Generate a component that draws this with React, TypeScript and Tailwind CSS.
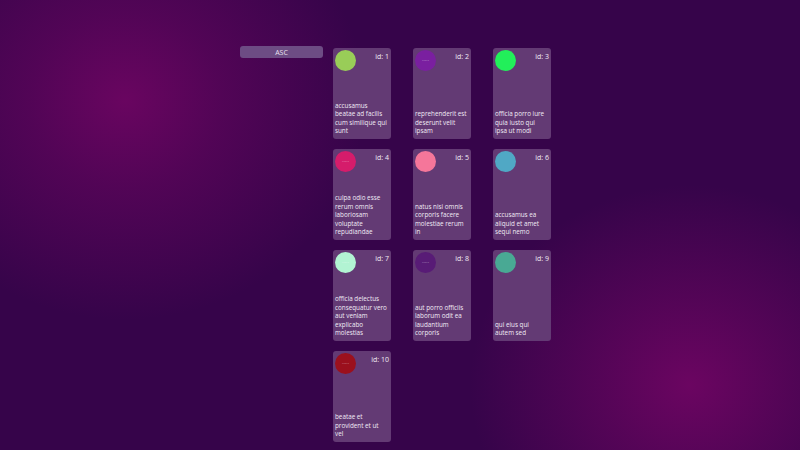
import React from 'react';

interface Post {
  id: number;
  color: string;
  text: string;
  alt?: boolean;
}

const posts: Post[] = [
  { id: 1, color: 'bg-[#99cd58]', text: 'accusamus beatae ad facilis cum similique qui sunt' },
  { id: 2, color: 'bg-[#7a1fa0]', text: 'reprehenderit est deserunt velit ipsam', alt: true },
  { id: 3, color: 'bg-[#22ef5a]', text: 'officia porro iure quia iusto qui ipsa ut modi' },
  { id: 4, color: 'bg-[#d51c6b]', text: 'culpa odio esse rerum omnis laboriosam voluptate repudiandae', alt: true },
  { id: 5, color: 'bg-[#f5769a]', text: 'natus nisi omnis corporis facere molestiae rerum in' },
  { id: 6, color: 'bg-[#50a8c5]', text: 'accusamus ea aliquid et amet sequi nemo' },
  { id: 7, color: 'bg-[#b2f4d3]', text: 'officia delectus consequatur vero aut veniam explicabo molestias', alt: true },
  { id: 8, color: 'bg-[#581b76]', text: 'aut porro officiis laborum odit ea laudantium corporis', alt: true },
  { id: 9, color: 'bg-[#49a994]', text: 'qui eius qui autem sed' },
  { id: 10, color: 'bg-[#9b101d]', text: 'beatae et provident et ut vel', alt: true },
];

const PostCard: React.FC<{ post: Post }> = ({ post }) => {
  return (
    <div className="w-[58px] h-[91px] rounded-[3px] bg-[#633a74] pl-[2px] pr-[2px] pt-[2px] pb-[3px] flex flex-col">
      <div className="flex items-start justify-between">
        <div className={`w-[21px] h-[21px] rounded-full ${post.color} flex items-center justify-center`}>
          {post.alt && <span className="text-[2.5px] leading-none text-white/40">photo</span>}
        </div>
        <span className="text-[7px] leading-none mt-[3px] text-[#f1eaf5]">id: {post.id}</span>
      </div>
      <p className="mt-auto pr-[1px] text-[6.3px] leading-[8.6px] text-[#f1eaf5]">{post.text}</p>
    </div>
  );
};

export default function App() {
  return (
    <div
      className="w-full h-[450px] overflow-hidden [background:radial-gradient(ellipse_240px_220px_at_125px_100px,#690560_0%,rgba(105,5,96,0.55)_40%,rgba(54,4,74,0)_100%),radial-gradient(ellipse_220px_200px_at_690px_385px,#6b0561_0%,rgba(106,5,96,0.6)_40%,rgba(54,4,74,0)_100%),#36044a]"
      style={{ fontFamily: '"Open Sans", "Noto Sans", sans-serif' }}
    >
      <div className="flex items-start gap-[10px] pl-[240px] pt-[46px]">
        <button className="w-[83px] h-[12px] rounded-[3px] bg-[#6d4c84] text-[7px] leading-none text-[#e9e0f0]">
          ASC
        </button>
        <div className="grid grid-cols-[repeat(3,58px)] gap-x-[22px] gap-y-[10px] mt-[2px]">
          {posts.map((p) => (
            <PostCard key={p.id} post={p} />
          ))}
        </div>
      </div>
    </div>
  );
}
